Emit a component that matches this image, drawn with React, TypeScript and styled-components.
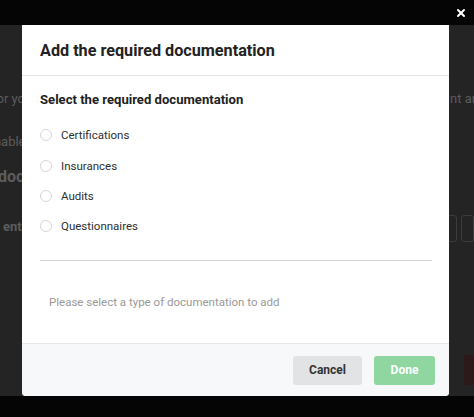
import React from "react";
import styled, { createGlobalStyle } from "styled-components";
import { X } from "lucide-react";

const Global = createGlobalStyle`
  html, body {
    margin: 0;
    padding: 0;
    background: #050505;
    font-family: Roboto, "Liberation Sans", Arial, sans-serif;
  }
`;

const Screen = styled.div`
  position: relative;
  width: 474px;
  height: 417px;
  overflow: hidden;
  display: flex;
  flex-direction: column;
`;

const TopBar = styled.div`
  height: 25px;
  background: #050505;
  display: flex;
  justify-content: flex-end;
  align-items: center;
  padding-right: 7px;
  color: #fff;
`;

const Dimmed = styled.div`
  height: 371px;
  background: #242424;
  display: grid;
  grid-template-columns: 22px 1fr 25px;
`;

const Side = styled.div`
  overflow: hidden;
  color: #5c5c5c;
  font-size: 13px;
`;

const SideLine = styled.div<{ $top: number; $shift?: number; $bold?: boolean; $big?: boolean }>`
  height: ${(p) => p.$top}px;
  display: flex;
  align-items: flex-end;
  white-space: nowrap;
  margin-left: ${(p) => p.$shift ?? 0}px;
  font-weight: ${(p) => (p.$bold ? 700 : 400)};
  font-size: ${(p) => (p.$big ? 16 : 13)}px;
  line-height: 1;
`;

const GhostBox = styled.div`
  margin-top: 110px;
  display: flex;
  gap: 4px;
  margin-left: -6px;
`;

const GhostButton = styled.div`
  width: 20px;
  height: 25px;
  border: 1px solid #3c3c3c;
  border-radius: 3px;
`;

const GhostRed = styled.div`
  margin-top: 113px;
  margin-left: 15px;
  height: 30px;
  background: #2c1a1a;
`;

const Bottom = styled.div`
  flex: 1;
  background: #050505;
`;

const Modal = styled.div`
  position: absolute;
  left: 22px;
  top: 25px;
  width: 427px;
  height: 371px;
  background: #fff;
  border-radius: 0 0 4px 4px;
  display: flex;
  flex-direction: column;
  overflow: hidden;
`;

const Header = styled.div`
  height: 50px;
  border-bottom: 1px solid #e4e4e4;
  display: flex;
  align-items: center;
  padding: 0 18px;
`;

const Title = styled.h2`
  margin: 0;
  font-size: 16.2px;
  font-weight: 700;
  color: #222;
`;

const Body = styled.div`
  flex: 1;
  padding: 16px 17px 0 18px;
`;

const Subtitle = styled.h3`
  margin: 0 0 13px;
  font-size: 13.1px;
  font-weight: 700;
  color: #222;
`;

const Options = styled.div`
  display: flex;
  flex-direction: column;
`;

const Option = styled.label`
  height: 30.4px;
  display: flex;
  align-items: center;
  gap: 9px;
  font-size: 11.5px;
  color: #2e2e2e;
`;

const Radio = styled.span`
  width: 12px;
  height: 12px;
  border: 1px solid #d6d6d6;
  border-radius: 50%;
  box-sizing: border-box;
  flex: none;
`;

const Divider = styled.hr`
  margin: 18px 0 0;
  border: 0;
  border-top: 1px solid #d4d4d4;
`;

const Hint = styled.p`
  margin: 34px 0 0 9px;
  font-size: 11.5px;
  color: #999;
`;

const Footer = styled.div`
  height: 52px;
  border-top: 1px solid #e6e8eb;
  background: #f7f8fa;
  display: flex;
  justify-content: flex-end;
  align-items: center;
  gap: 12px;
  padding: 0 14px 0 0;
`;

const Button = styled.button<{ $primary?: boolean }>`
  height: 29px;
  padding: 0;
  width: ${(p) => (p.$primary ? 61 : 69)}px;
  border: 0;
  border-radius: 3px;
  font-family: inherit;
  font-size: 12px;
  font-weight: 700;
  background: ${(p) => (p.$primary ? "#8fd6a1" : "#e2e3e5")};
  color: ${(p) => (p.$primary ? "#fff" : "#333")};
`;

const options = ["Certifications", "Insurances", "Audits", "Questionnaires"];

export default function App() {
  return (
    <>
      <Global />
      <Screen>
        <TopBar>
          <X size={12} strokeWidth={4} />
        </TopBar>
        <Dimmed>
          <Side>
            <SideLine $top={80} $shift={-8}>for you</SideLine>
            <SideLine $top={43} $shift={-13}>enable</SideLine>
            <SideLine $top={37} $shift={-2} $bold $big>docu</SideLine>
            <SideLine $top={48} $shift={3} $bold>ent</SideLine>
          </Side>
          <div />
          <Side>
            <SideLine $top={80} $shift={1}>nt ar</SideLine>
            <GhostBox>
              <GhostButton />
              <GhostButton />
            </GhostBox>
            <GhostRed />
          </Side>
        </Dimmed>
        <Bottom />
        <Modal>
          <Header>
            <Title>Add the required documentation</Title>
          </Header>
          <Body>
            <Subtitle>Select the required documentation</Subtitle>
            <Options>
              {options.map((o) => (
                <Option key={o}>
                  <Radio />
                  {o}
                </Option>
              ))}
            </Options>
            <Divider />
            <Hint>Please select a type of documentation to add</Hint>
          </Body>
          <Footer>
            <Button>Cancel</Button>
            <Button $primary>Done</Button>
          </Footer>
        </Modal>
      </Screen>
    </>
  );
}
